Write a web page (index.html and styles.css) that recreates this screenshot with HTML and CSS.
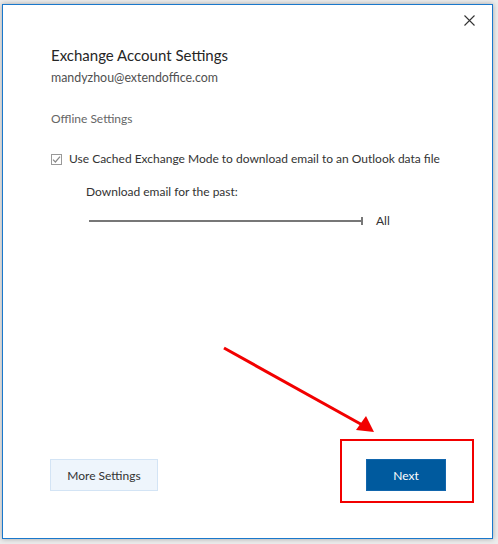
FILE: index.html
```html
<!DOCTYPE html>
<html lang="en">
<head>
    <meta charset="UTF-8">
    <meta name="viewport" content="width=device-width, initial-scale=1.0">
    <title>Exchange Account Settings</title>
    <link rel="stylesheet" href="styles.css">
</head>
<body>
    <div class="dialog">
        <div class="title-bar">
            <button class="close-btn" aria-label="Close">
                <svg width="11" height="11" viewBox="0 0 11 11">
                    <path d="M0.5 0.5 L10.5 10.5 M10.5 0.5 L0.5 10.5" stroke="#333" stroke-width="1.1" fill="none"/>
                </svg>
            </button>
        </div>

        <div class="content">
            <h1>Exchange Account Settings</h1>
            <p class="account">mandyzhou@extendoffice.com</p>

            <h2>Offline Settings</h2>

            <label class="check-row">
                <span class="checkbox">
                    <svg width="9" height="9" viewBox="0 0 9 9">
                        <path d="M1 4.6 L3.4 7 L8 1.6" stroke="#888" stroke-width="1.2" fill="none"/>
                    </svg>
                </span>
                Use Cached Exchange Mode to download email to an Outlook data file
            </label>

            <div class="download">
                <p>Download email for the past:</p>
                <div class="slider-row">
                    <div class="slider">
                        <span class="track"></span>
                        <span class="thumb"></span>
                    </div>
                    <span class="slider-value">All</span>
                </div>
            </div>
        </div>

        <div class="footer">
            <button class="btn btn-light">More Settings</button>
            <div class="highlight">
                <button class="btn btn-primary">Next</button>
            </div>
        </div>

        <!-- red pointer drawn over the dialog -->
        <svg class="pointer" width="498" height="544" viewBox="0 0 498 544">
            <line x1="224" y1="348" x2="366" y2="427" stroke="#f20000" stroke-width="3"/>
            <path d="M374 432 L356 430 L366 416 Z" fill="#f20000"/>
        </svg>
    </div>
</body>
</html>
```

FILE: styles.css
```css
* {
    margin: 0;
    padding: 0;
    box-sizing: border-box;
}

body {
    font-family: 'Lato', 'Open Sans', sans-serif;
    background: #ececec;
    padding: 4px 0 0 2px;
    width: 498px;
    height: 544px;
    overflow: hidden;
}

.dialog {
    width: 491px;
    height: 535px;
    background: #fff;
    border: 1px solid #1a78cc;
    box-shadow: 0 0 5px rgba(0,0,0,0.3);
    display: flex;
    flex-direction: column;
}

.title-bar {
    display: flex;
    justify-content: flex-end;
    height: 30px;
    padding: 10px 17px 0 0;
}

.close-btn {
    width: 11px;
    height: 11px;
    border: none;
    background: none;
    display: flex;
}

.content {
    padding: 9px 0 0 48px;
    flex: 1;
}

h1 {
    font-size: 15px;
    font-weight: normal;
    color: #262626;
    line-height: 22px;
}

.account {
    font-size: 12.4px;
    color: #505050;
    line-height: 18px;
    margin-top: 3px;
}

h2 {
    font-size: 12px;
    font-weight: normal;
    color: #666;
    line-height: 18px;
    margin-top: 23px;
}

.check-row {
    display: flex;
    align-items: center;
    gap: 7px;
    font-size: 12px;
    color: #333;
    line-height: 18px;
    margin-top: 22px;
}

.checkbox {
    width: 11px;
    height: 11px;
    border: 1px solid #999;
    display: flex;
    align-items: center;
    justify-content: center;
}

.download {
    padding-left: 35px;
    margin-top: 15px;
    font-size: 12px;
    color: #333;
    line-height: 18px;
}

.slider-row {
    display: flex;
    align-items: center;
    margin-top: 11px;
    padding-left: 3px;
}

.slider {
    width: 274px;
    height: 8px;
    display: flex;
    align-items: center;
}

.track {
    flex: 1;
    height: 2px;
    background: #777;
}

.thumb {
    width: 2px;
    height: 8px;
    background: #777;
}

.slider-value {
    margin-left: 13px;
    color: #333;
}

.footer {
    display: flex;
    justify-content: space-between;
    align-items: flex-start;
    padding: 0 18px 35px 47px;
}

.btn {
    height: 32px;
    font-family: inherit;
    font-size: 12px;
    cursor: pointer;
}

.btn-light {
    width: 108px;
    margin-top: 20px;
    background: #eef5fc;
    border: 1px solid #d3e4f5;
    color: #333;
}

.highlight {
    border: 2px solid #f20000;
    padding: 18px 26px 10px 24px;
}

.btn-primary {
    width: 80px;
    background: #005a9e;
    border: 1px solid #1166ad;
    color: #fff;
}

.pointer {
    position: absolute;
    left: 0;
    top: 0;
    pointer-events: none;
}
```
